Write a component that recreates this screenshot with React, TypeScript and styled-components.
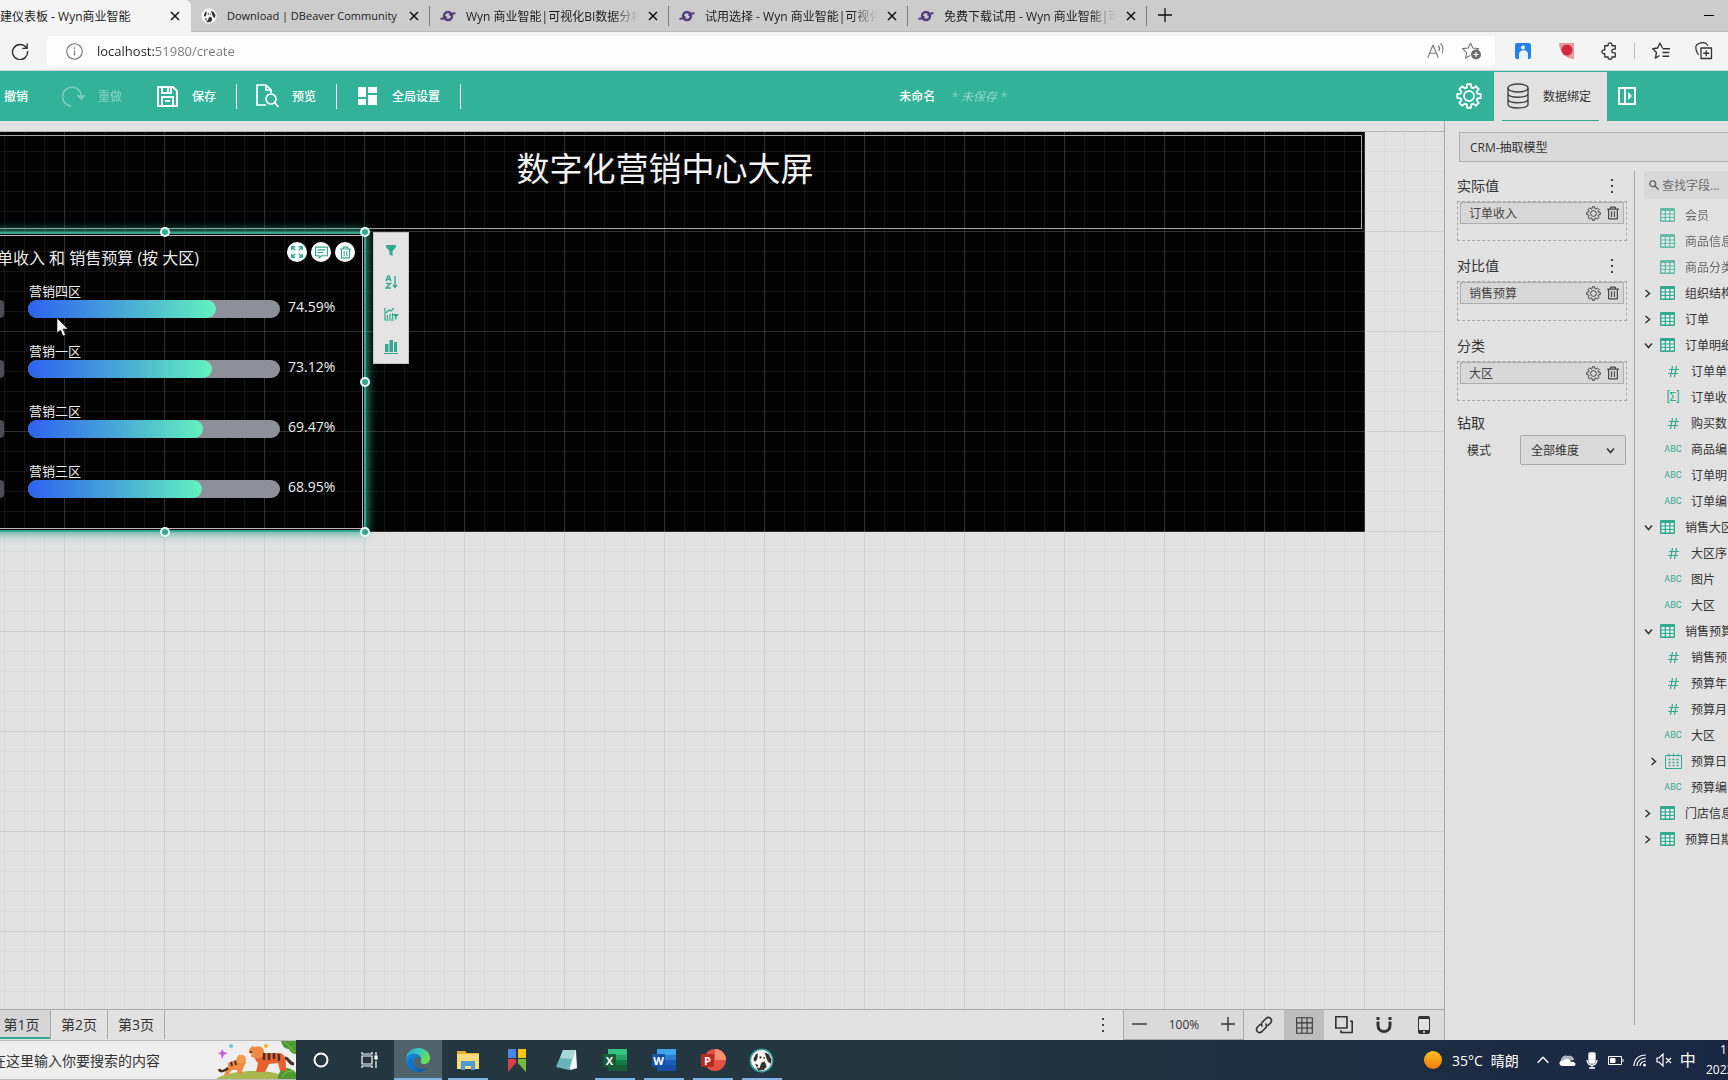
import React from "react";
import styled, { createGlobalStyle, css } from "styled-components";

const GREEN = "#31b299";
const TEAL = "#35a88f";
const SANS = `"Open Sans", "Noto Sans CJK SC", "Noto Sans", sans-serif`;

const Global = createGlobalStyle`
  *, *::before, *::after { box-sizing: border-box; }
  body { margin: 0; background: #e2e2e2; overflow: hidden; font-family: ${SANS}; font-size: 12px; color: #333; }
  button, input, select { font: inherit; color: inherit; margin: 0; padding: 0; border: 0; background: none; }
  input, select { outline: none; min-width: 0; }
  h1, h2, h3, p, ul { margin: 0; padding: 0; font-weight: 400; }
  ul { list-style: none; }
  svg { display: block; flex: none; }
`;

const Screen = styled.div`
  display: flex;
  flex-direction: column;
  height: 100vh;
  overflow: hidden;
  white-space: nowrap;
`;

/* ---------- browser chrome ---------- */
const TabStrip = styled.div`
  flex: none;
  display: flex;
  height: 32px;
  background: #cccccc;
  border-bottom: 1px solid #bdbdbd;
  color: #1c1c1c;
`;
const Tab = styled.div<{ $active?: boolean }>`
  display: flex;
  align-items: center;
  gap: 10px;
  flex: none;
  width: ${(p) => (p.$active ? 191 : 239)}px;
  padding: 0 11px 0 ${(p) => (p.$active ? 0 : 10)}px;
  ${(p) => p.$active && css`height: 32px; background: #f4f4f4; border-radius: 0 6px 0 0;`}
`;
const TabDivided = styled(Tab)`
  background: linear-gradient(#7d7d7d, #7d7d7d) right center / 1px 20px no-repeat;
`;
const TabTitle = styled.span<{ $fade?: boolean; $latin?: boolean }>`
  flex: 1;
  overflow: hidden;
  font-size: ${(p) => (p.$latin ? 11 : 12)}px;
  ${(p) => p.$fade && css`mask-image: linear-gradient(to right, #000 85%, transparent);`}
`;
const PlainButton = styled.button`
  display: grid;
  place-items: center;
  flex: none;
  cursor: pointer;
`;
const NewTab = styled(PlainButton)`width: 36px; height: 30px;`;
const Minimise = styled(PlainButton)`width: 38px; height: 32px; margin-left: auto;`;

const AddressBar = styled.div`
  flex: none;
  display: flex;
  align-items: center;
  height: 39px;
  padding: 0 15px 0 11px;
  background: #f4f4f4;
  border-bottom: 1px solid #cfd6d4;
  color: #333;
`;
const UrlBox = styled.label`
  flex: 1;
  display: flex;
  align-items: center;
  gap: 14px;
  height: 30px;
  margin: 0 18px;
  padding: 0 13px 0 19px;
  border-radius: 4px;
  background: #fdfdfd;
  color: #777;
`;
const UrlInput = styled.input`
  flex: 1;
  height: 24px;
  font-size: 13px;
  background: linear-gradient(to right, #222 58px, #777 58px);
  background-clip: text;
  -webkit-background-clip: text;
  color: transparent;
`;
const UrlActions = styled.span`display: flex; align-items: center; gap: 17px;`;
const ChromeIcons = styled.div`
  display: flex;
  align-items: center;
  gap: 25px;
  padding-left: 2px;
`;
const ChromeRule = styled.i`width: 1px; height: 16px; background: #bbb; margin: 0 -8px 0 -10px;`;

/* ---------- application header ---------- */
const Header = styled.header`
  flex: none;
  display: flex;
  height: 50px;
  align-items: center;
  background: ${GREEN};
  color: #fff;
`;
const HeaderTools = styled.div`display: flex; align-items: center; gap: 34px; padding-left: 4px;`;
const ToolButton = styled.button<{ $dim?: boolean }>`
  display: flex;
  align-items: center;
  gap: 12px;
  font-weight: 500;
  opacity: ${(p) => (p.$dim ? 0.35 : 1)};
  cursor: pointer;
`;
const Rule = styled.i<{ $last?: boolean }>`
  width: 1px;
  height: 25px;
  background: #fff;
  margin: 0 ${(p) => (p.$last ? 0 : 19)}px 0 20px;
`;
const DocTitle = styled.div`display: flex; gap: 16px; margin: 0 auto; font-weight: 500;`;
const Unsaved = styled.em`opacity: 0.45; font-weight: 400;`;
const HeaderPanel = styled.div`display: flex; width: 283px; height: 50px; flex: none;`;
const GearButton = styled(PlainButton)`width: 49px;`;
const BindTab = styled.button`
  display: flex;
  align-items: center;
  gap: 14px;
  width: 113px;
  margin-top: 1px;
  padding: 0 0 2px 13px;
  background: linear-gradient(${TEAL}, ${TEAL}) 8px 100% / 97px 1px no-repeat #e2e2e2;
  color: #333;
`;
const CollapseButton = styled(PlainButton)`width: 41px;`;

/* ---------- work area ---------- */
const Work = styled.div`flex: 1; display: flex; min-height: 0; background: #e2e2e2;`;
const Editor = styled.main`flex: 1; display: flex; flex-direction: column; min-width: 0; padding-top: 10px;`;

const grid = (minor: string, major: string) => css`
  background-image:
    linear-gradient(to right, ${major} 1px, transparent 1px),
    linear-gradient(${major} 1px, transparent 1px),
    linear-gradient(to right, ${minor} 1px, transparent 1px),
    linear-gradient(${minor} 1px, transparent 1px);
  background-size: 100px 100px, 100px 100px, 20px 20px, 20px 20px;
  background-position: 64px 0, 0 0, 4px 0, 0 0;
`;
const Stage = styled.div`
  position: relative;
  flex: 1;
  overflow: hidden;
  box-shadow: inset 0 1px #b4b4b4;
  ${grid("rgba(0,0,0,.028)", "rgba(0,0,0,.05)")}
`;
const Board = styled.section`
  position: absolute;
  left: 0;
  top: 1px;
  width: 1365px;
  height: 400px;
  background-color: #020202;
  ${grid("rgba(255,255,255,.075)", "rgba(255,255,255,.12)")}
  background-position: 64px -1px, 0 -1px, 4px -1px, 0 -1px;
`;
const TitleWidget = styled.div`
  position: absolute;
  left: -32px;
  top: 3px;
  width: 1394px;
  height: 94px;
  padding-top: 11px;
  border: 1px solid #a5a5a5;
  text-align: center;
`;
const BoardTitle = styled.h1`font-size: 33px; line-height: 44px; color: #f2f2f2;`;
const ChartWidget = styled.article`
  position: absolute;
  left: -36px;
  top: 100px;
  width: 402px;
  height: 300px;
  padding: 1px;
  border: 2px solid ${TEAL};
  box-shadow: 0 0 10px 1px ${TEAL};
`;
const ChartFrame = styled.div`
  height: 100%;
  border: 1px solid #b9b9b9;
  display: flex;
  flex-direction: column;
  align-items: flex-end;
  padding-top: 6px;
`;
const ChartHead = styled.div`
  display: flex;
  align-items: flex-start;
  justify-content: flex-end;
  gap: 88px;
  width: 396px;
  height: 40px;
  padding-right: 7px;
`;
const ChartTitle = styled.h2`
  font-size: 16px;
  line-height: 32px;
  color: #ececec;
`;
const HeadActions = styled.div`display: flex; gap: 4px;`;
const RoundButton = styled(PlainButton)`
  width: 20px;
  height: 20px;
  border-radius: 50%;
  background: #fff;
  color: ${TEAL};
`;
const BarList = styled.ul`width: 362px; display: flex; flex-direction: column;`;
const BarRow = styled.li`
  display: grid;
  grid-template-columns: 4px 252px 1fr;
  grid-template-rows: 18px 18px;
  column-gap: 24px;
  height: 60px;
`;
const RegionName = styled.span`grid-column: 2; padding-left: 1px; font-size: 13px; line-height: 18px; color: #f0f0f0;`;
const PrevTrack = styled.i`grid-column: 1; grid-row: 2; border-radius: 0 9px 9px 0; background: #4b4c55;`;
const Track = styled.div`grid-column: 2; grid-row: 2; border-radius: 9px; background: #8d9098;`;
const Fill = styled.div`
  height: 18px;
  border-radius: 9px;
  background: linear-gradient(to right, #2d62f0, #46a4d8 48%, #63f2bd);
`;
const Percent = styled.span`
  grid-column: 3;
  grid-row: 2;
  margin-left: -16px;
  font-size: 14px;
  line-height: 14px;
  color: #eee;
  font-weight: 500;
`;
const Handle = styled.i<{ $x: number; $y: number }>`
  position: absolute;
  left: ${(p) => p.$x}px;
  top: ${(p) => p.$y}px;
  width: 10px;
  height: 10px;
  border: 2px solid #e9fffa;
  border-radius: 50%;
  background: ${TEAL};
`;
const SideTools = styled.div`
  position: absolute;
  left: 373px;
  top: 100px;
  width: 36px;
  height: 132px;
  padding-top: 3px;
  display: flex;
  flex-direction: column;
  justify-content: space-around;
  align-items: center;
  background: #e4e4e4;
  border: 1px solid #c4c4c4;
  color: ${TEAL};
`;
const Pointer = styled.svg`position: absolute; left: 56px; top: 186px;`;

const Footer = styled.footer`
  flex: none;
  display: flex;
  height: 31px;
  border-top: 1px solid #a9a9a9;
`;
const PageTab = styled.button<{ $on?: boolean }>`
  width: ${(p) => (p.$on ? 51 : 57)}px;
  padding: 0 ${(p) => (p.$on ? 7 : 0)}px 1px 0;
  border-right: 1px solid #a9a9a9;
  font-size: 14px;
  height: 29px;
  ${(p) => p.$on && css`background: #d6d6d6; box-shadow: inset 0 -2px ${TEAL};`}
`;
const MoreButton = styled(PlainButton)`width: 40px; margin-left: auto;`;
const ZoomBox = styled.div`
  display: flex;
  justify-content: space-between;
  align-items: center;
  width: 121px;
  padding: 0 8px;
  border: 1px solid #a9a9a9;
  border-top: 0;
  background: #dadada;
`;
const FootButton = styled(PlainButton)<{ $on?: boolean }>`
  width: 40px;
  background: ${(p) => (p.$on ? "#bdbdbd" : "#dcdcdc")};
`;

/* ---------- data panel ---------- */
const Panel = styled.aside`
  flex: none;
  width: 284px;
  display: flex;
  flex-direction: column;
  gap: 9px;
  padding: 11px 0 15px 12px;
  border-left: 1px solid #a9a9a9;
  overflow: hidden;
`;
const ModelSelect = styled.select`
  flex: none;
  appearance: none;
  width: 300px;
  height: 30px;
  margin-left: 2px;
  padding-left: 10px;
  border: 1px solid #b0b0b0;
  background: #dadada;
`;
const PanelBody = styled.div`flex: 1; display: flex; min-height: 0;`;
const Bindings = styled.div`
  flex: none;
  width: 178px;
  padding-right: 7px;
  border-right: 1px solid #aaa;
`;
const Binding = styled.section`height: 80px;`;
const BindHead = styled.div`
  display: flex;
  justify-content: space-between;
  align-items: center;
  height: 30px;
  padding-right: 13px;
`;
const BindTitle = styled.h3`font-size: 14px; line-height: 24px;`;
const DropZone = styled.div`height: 40px; padding: 0 2px; border: 1px dashed #a8a8a8;`;
const Chip = styled.div`
  display: flex;
  align-items: center;
  gap: 5px;
  height: 22px;
  padding: 0 3px 0 8px;
  border: 1px solid #adadad;
  background: #d8d8d8;
  color: #444;
`;
const ChipName = styled.span`flex: 1;`;
const ModeRow = styled.label`
  display: flex;
  align-items: center;
  justify-content: space-between;
  position: relative;
  padding: 0 1px 0 10px;
`;
const ModeSelect = styled.select`
  appearance: none;
  width: 106px;
  height: 30px;
  padding-left: 10px;
  border: 1px solid #a9a9a9;
  border-radius: 2px;
  background: #dadada;
`;
const SelectArrow = styled.svg`position: absolute; right: 12px; top: 11px; pointer-events: none;`;
const Fields = styled.div`flex: 1; min-width: 0; padding-left: 9px; overflow: hidden;`;
const SearchBox = styled.label`
  display: flex;
  align-items: center;
  gap: 3px;
  height: 28px;
  padding-left: 5px;
  background: #d8d8d8;
  color: #666;
  margin-bottom: 3px;
`;
const SearchInput = styled.input`
  width: 100%;
  &::placeholder { color: #6f6f6f; opacity: 1; }
`;
const TreeRow = styled.li<{ $child?: boolean; $faint?: boolean }>`
  display: flex;
  align-items: center;
  height: 26px;
  padding-left: ${(p) => (p.$child ? 6 : 0)}px;
  opacity: ${(p) => (p.$faint ? 0.7 : 1)};
`;
const Twisty = styled.span`width: 15px; flex: none;`;
const Kind = styled.span<{ $child?: boolean; $sum?: boolean }>`
  display: grid;
  place-items: center;
  flex: none;
  width: ${(p) => (p.$child ? 18 : 16)}px;
  margin: ${(p) => (p.$child ? "0 9px 0 -1px" : "0 10px 0 0")};
  font-family: Roboto, sans-serif;
  font-size: ${(p) => (p.$sum ? 12 : 9)}px;
  color: ${TEAL};
`;

/* ---------- desktop taskbar ---------- */
const Taskbar = styled.nav`
  flex: none;
  display: flex;
  height: 40px;
  background: linear-gradient(to right, #24363f 0%, #24363f 50%, #1d2d40 78%, #1a2743 100%);
  color: #fff;
`;
const TaskSearch = styled.label`
  display: flex;
  width: 296px;
  flex: none;
  background: #efefef;
  border: 1px solid #bbb;
  border-width: 1px 0;
  overflow: hidden;
`;
const TaskInput = styled.input`
  width: 224px;
  flex: none;
  margin-left: -8px;
  font-size: 14px;
  &::placeholder { color: #333; opacity: 1; }
`;
const TaskButton = styled(PlainButton)<{ $run?: boolean; $on?: boolean }>`
  width: ${(p) => (p.$on ? 48 : 49)}px;
  background: ${(p) => (p.$run ? "linear-gradient(#7fb4e4, #7fb4e4) center bottom / 40px 2px no-repeat" : "none")};
  ${(p) => p.$on && css`margin-right: 1px; background: linear-gradient(#7fb4e4, #7fb4e4) center bottom / 48px 2px no-repeat #52626b;`}
`;
const Tray = styled.div`
  display: flex;
  align-items: center;
  gap: 8px;
  margin-left: auto;
  width: 304px;
  flex: none;
  font-size: 14px;
`;
const TrayIcons = styled.div`display: flex; align-items: center; gap: 8px; margin-left: 8px;`;
const Ime = styled.span`font-size: 16px; line-height: 20px;`;
const Clock = styled.time`
  width: 22px;
  margin-left: auto;
  display: flex;
  flex-direction: column;
  overflow: hidden;
  font-size: 12px;
  line-height: 20px;
`;
const Hour = styled.span`padding-left: 14px;`;

/* ---------- drawings ---------- */
type Size = { s?: number; w?: number };

const gearPath = (() => {
  const pts: string[] = [];
  for (let i = 0; i < 8; i++) {
    const a = (i * Math.PI) / 4;
    [[-0.28, 8], [-0.17, 11], [0.17, 11], [0.28, 8]].forEach(([d, r]) =>
      pts.push(`${(12 + r * Math.sin(a + d)).toFixed(2)} ${(12 - r * Math.cos(a + d)).toFixed(2)}`)
    );
  }
  return "M" + pts.join("L") + "Z";
})();

const Line = ({ d, s = 16, w = 1.3, children }: Size & { d?: string; children?: React.ReactNode }) => (
  <svg width={s} height={s} viewBox="0 0 24 24" fill="none" stroke="currentColor" strokeWidth={(w * 24) / s} strokeLinejoin="round">
    {d && <path d={d} />}
    {children}
  </svg>
);
const Gear = ({ s = 26, w = 1.8 }: Size) => <Line s={s} w={w} d={gearPath}><circle cx="12" cy="12" r="4.6" /></Line>;
const Trash = ({ s = 14, w = 1.2 }: Size) => <Line s={s} w={w} d="M2 5.500h20M8 5V2h8v3M4.500 6v16h15V6M9.500 9v10M14.500 9v10" />;
const Close = () => <svg width="10" height="10" viewBox="0 0 10 10" stroke="#111" strokeWidth="1.5"><path d="M1 1l8 8M9 1l-8 8" /></svg>;
const Dots = () => <svg width="3" height="16" fill="#444"><rect width="2" height="2" y="1" /><rect width="2" height="2" y="7" /><rect width="2" height="2" y="13" /></svg>;
const WynMark = () => (
  <svg width="16" height="16" viewBox="0 0 16 16" fill="none" stroke="#553c80">
    <circle cx="8" cy="8" r="4" strokeWidth="2.400" />
    <path d="M0.500 10.500c3 1 4.500-.5 6-2M15.500 5.500c-3-1-4.500.5-6 2" strokeWidth="2" />
  </svg>
);
const BeaverMark = ({ s = 16, ring = "#f3f3f3" }: { s?: number; ring?: string }) => (
  <svg width={s} height={s} viewBox="0 0 24 24">
    <circle cx="12" cy="12" r="11.500" fill={ring} />
    <circle cx="12" cy="12" r="10" fill="#f7f7f5" />
    <path d="M4.500 10l2-4 2-1-.5 5-1.500 3-2-1z" fill="#33302e" />
    <path d="M15 4l4 2 2.500 5-.5 4-3-2-1.500-4z" fill="#33302e" />
    <path d="M12 14l3-1 1 2 1 3-3 3-5 .5-2-3 3 1z" fill="#33302e" />
    <path d="M6 15l2.500 1 .5 1.500-2 .5z" fill="#33302e" />
    <circle cx="11" cy="9" r="1" fill="#222" /><circle cx="14.500" cy="9.500" r=".8" fill="#222" />
  </svg>
);
const TableMark = () => (
  <svg width="15" height="14" viewBox="0 0 15 14">
    <rect width="15" height="14" rx="1" fill={TEAL} />
    {[3, 6.500, 10].map((y) => [1.500, 6, 10.500].map((x) => <rect key={x + "-" + y} x={x} y={y} width="3.200" height="2.400" fill="#e9f3f0" />))}
  </svg>
);
const DateMark = () => (
  <svg width="17" height="16" viewBox="0 0 17 16" fill="none" stroke={TEAL}>
    <path d="M.5 2.500h16v13H.5zM4 .5v3M8.500.5v3M13 .5v3" />
    <path d="M3.500 6.500h11M3.500 9.500h11M3.500 12.500h11" strokeDasharray="2 2" strokeWidth="1.500" />
  </svg>
);
const Chevron = ({ open }: { open?: boolean }) => (
  <svg width="9" height="9" viewBox="0 0 9 9" fill="none" stroke="#333" strokeWidth="1.500">
    <path d={open ? "M1 2.500l3.500 4 3.500-4" : "M1.500 1l4 3.500-4 3.500"} />
  </svg>
);
const Hash = () => <svg width="11" height="11" viewBox="0 0 11 11" stroke={TEAL} strokeWidth="1.200"><path d="M4.500 0L2.500 11M8.500 0L6.500 11M1 3.500h10M0 7.500h10" /></svg>;

const EdgeMark = () => (
  <svg width="26" height="26" viewBox="0 0 26 26">
    <defs>
      <linearGradient id="edgeTop" x1="0" y1="0" x2="1" y2="0.400"><stop offset="0" stopColor="#2aa7dd" /><stop offset=".55" stopColor="#37cbc0" /><stop offset="1" stopColor="#6be04e" /></linearGradient>
      <linearGradient id="edgeLow" x1="0" y1="0" x2="1" y2="1"><stop offset="0" stopColor="#1b8fdc" /><stop offset="1" stopColor="#0d509c" /></linearGradient>
    </defs>
    <path d="M1 13C1 5 7 1 13 1c7 0 12 4.500 12 10 0 4-3 6-6 6s-4-1.500-3-3c1-2-1-5-4-5-5 0-11 3-11 4z" fill="url(#edgeTop)" />
    <path d="M1 13c0-4 4-6.500 8-6.500 5 0 7.500 3.500 7 6-.3-1.500-2-2.500-4-2-3.500 1-4 5-2 8 2.500 4 8 5 13 1.500C21 23.500 17 25 13 25 6 25 1 20 1 13z" fill="url(#edgeLow)" />
    <path d="M9 11c-3 4-1 11 5 13-6 1-11-3-11-8 0-3 3-5 6-5z" fill="#1573c6" />
  </svg>
);
const FolderMark = () => (
  <svg width="24" height="22" viewBox="0 0 24 22">
    <path d="M1 2h8l2 2h12v16H1z" fill="#e5b22f" /><path d="M1 5h22v15H1z" fill="#fbdc7c" />
    <path d="M5 12h14v9h-4v-4H9v4H5z" fill="#4b9cd3" />
  </svg>
);
const FlagMark = () => (
  <svg width="20" height="24" viewBox="0 0 20 24">
    <path d="M1 1h8v9H1z" fill="#4a87e8" /><path d="M11 1h8v9h-8z" fill="#f5c518" />
    <path d="M1 11h8v4l-8 9z" fill="#d93d4a" /><path d="M11 11h8v13l-8-9z" fill="#79b83e" />
  </svg>
);
const NoteMark = () => (
  <svg width="24" height="24" viewBox="0 0 24 24">
    <path d="M9 2h13l1 18-7 2z" fill="#dfe9ea" /><path d="M9 2h12l-6 20-13-3z" fill="#69b3bb" /><path d="M9 2h12l-3 9-12-1z" fill="#a9d7da" />
    <path d="M16 22l5-19 2 17z" fill="#f4f6f6" />
  </svg>
);
const OfficeMark = ({ letter, tones, round }: { letter: string; tones: string[]; round?: boolean }) => (
  <svg width="26" height="24" viewBox="0 0 26 24">
    {round ? (
      <><circle cx="15" cy="12" r="11" fill={tones[1]} /><path d="M15 1a11 11 0 0 1 11 11H15z" fill={tones[0]} /></>
    ) : (
      <><path d="M6 1h19v6H6z" fill={tones[0]} /><path d="M6 7h19v5H6z" fill={tones[1]} /><path d="M6 12h19v5H6z" fill={tones[2]} /><path d="M6 17h19v6H6z" fill={tones[3]} /></>
    )}
    <rect x="1" y="6" width="13" height="13" rx="1" fill={tones[3]} />
    <text x="7.500" y="16.500" textAnchor="middle" fontSize="11" fontWeight="700" fill="#fff" fontFamily="Open Sans, sans-serif">{letter}</text>
  </svg>
);
const Tigers = () => (
  <svg width="80" height="38" viewBox="0 0 80 38">
    <path d="M0 38c12-9 50-10 62-5l6 5z" fill="#a9b84e" />
    <path d="M65 0h15v13c-3 0-6-2-7-5-4 0-7-3-8-8zM62 38c0-6 3-10 7-11 5 0 9 2 11 5v6z" fill="#4e9a34" />
    <path d="M68 1c4 2 6 6 11 10M66 36c3-5 6-6 11-6" stroke="#8ec64c" fill="none" />
    <path d="M38 15c3 0 4-3 9-3h15c8 0 8 7 8 18h-6l-2-8-9 1-4 8h-9l2-9c-3-3-4-6-4-7z" fill="#e8622f" />
    <path d="M33 9l3-4 3 1c4-2 8 0 9 4 1 5-3 8-8 7-5 0-8-3-7-8z" fill="#f28a45" />
    <circle cx="35" cy="11" r="1" fill="#33231f" /><path d="M31 12l5 1-2 3z" fill="#fff" />
    <path d="M48 12v7M53 12v7M58 12v6M63 13v7" stroke="#45302f" strokeWidth="2.400" />
    <path d="M69 17c4 0 4 6 9 6" stroke="#45302f" strokeWidth="3" fill="none" />
    <path d="M12 22c3-2 9-3 12-5l6 4-4 9v3h-4l-1-4h-5l-4 5H8l4-8z" fill="#f08a3f" />
    <path d="M21 16l2-2c4-1 7 1 7 4s-3 5-6 4-4-3-3-6z" fill="#f39a50" />
    <path d="M12 27c-4 4-8 4-9 1" stroke="#453022" strokeWidth="2.500" fill="none" />
    <path d="M15 21l1 4M19 20l1 4" stroke="#45302f" strokeWidth="2" />
    <path d="M6 8l2 3 4 1-4 2-2 4-1-4-3-2 3-1z" fill="#c466dc" />
    <circle cx="15" cy="5" r="2" fill="#6cccd2" /><circle cx="50" cy="5" r="2" fill="#e7bd1b" />
  </svg>
);

/* ---------- data ---------- */
const regions = [
  { name: "营销四区", value: 74.59 },
  { name: "营销一区", value: 73.12 },
  { name: "营销二区", value: 69.47 },
  { name: "营销三区", value: 68.95 },
];
const bindings = [
  { title: "实际值", field: "订单收入", menu: true },
  { title: "对比值", field: "销售预算", menu: true },
  { title: "分类", field: "大区", menu: false },
];
type Node = { name: string; kind: "table" | "num" | "sum" | "abc" | "date"; state?: "open" | "shut"; faint?: boolean };
const nodes: Node[] = [
  { name: "会员", kind: "table", faint: true },
  { name: "商品信息", kind: "table", faint: true },
  { name: "商品分类", kind: "table", faint: true },
  { name: "组织结构", kind: "table", state: "shut" },
  { name: "订单", kind: "table", state: "shut" },
  { name: "订单明细", kind: "table", state: "open" },
  { name: "订单单", kind: "num" },
  { name: "订单收", kind: "sum" },
  { name: "购买数", kind: "num" },
  { name: "商品编", kind: "abc" },
  { name: "订单明", kind: "abc" },
  { name: "订单编", kind: "abc" },
  { name: "销售大区", kind: "table", state: "open" },
  { name: "大区序", kind: "num" },
  { name: "图片", kind: "abc" },
  { name: "大区", kind: "abc" },
  { name: "销售预算", kind: "table", state: "open" },
  { name: "销售预", kind: "num" },
  { name: "预算年", kind: "num" },
  { name: "预算月", kind: "num" },
  { name: "大区", kind: "abc" },
  { name: "预算日", kind: "date", state: "shut" },
  { name: "预算编", kind: "abc" },
  { name: "门店信息", kind: "table", state: "shut" },
  { name: "预算日期", kind: "table", state: "shut" },
];
const kindMark = {
  table: <TableMark />,
  num: <Hash />,
  sum: <>[Σ]</>,
  abc: <>ABC</>,
  date: <DateMark />,
};
const wynTabs = ["Wyn 商业智能|可视化BI数据分析", "试用选择 - Wyn 商业智能|可视化", "免费下载试用 - Wyn 商业智能|可"];

export default function App() {
  return (
    <Screen>
      <Global />
      <TabStrip>
        <Tab $active><TabTitle>建仪表板 - Wyn商业智能</TabTitle><PlainButton aria-label="关闭"><Close /></PlainButton></Tab>
        <TabDivided><BeaverMark /><TabTitle $latin>Download | DBeaver Community</TabTitle><PlainButton aria-label="关闭"><Close /></PlainButton></TabDivided>
        {wynTabs.map((t) => (
          <TabDivided key={t}><WynMark /><TabTitle $fade>{t}</TabTitle><PlainButton aria-label="关闭"><Close /></PlainButton></TabDivided>
        ))}
        <NewTab aria-label="新建标签页"><svg width="14" height="14" stroke="#111" strokeWidth="1.300"><path d="M7 0v14M0 7h14" /></svg></NewTab>
        <Minimise aria-label="最小化"><svg width="10" height="2"><rect width="10" height="1" /></svg></Minimise>
      </TabStrip>

      <AddressBar>
        <PlainButton aria-label="刷新"><Line s={18} w={1.4} d="M20.500 8A10 10 0 1 0 22 12M21.500 2v6.500H15" /></PlainButton>
        <UrlBox>
          <Line s={17} w={1.1}><circle cx="12" cy="12" r="11" /><path d="M12 10.500v7M12 6v2.500" /></Line>
          <UrlInput aria-label="地址" defaultValue="localhost:51980/create" />
          <UrlActions>
            <Line s={18} w={1.1} d="M1 21L8 4l7 17M3.500 15h9M15 5c2 2 2 5 1 7M18 2c4 3 4 9 2 13" />
            <svg width="20" height="18" viewBox="0 0 20 18"><path d="M8.500 1l2.300 5 5.700.6-2 2.400M8.500 1L6.200 6l-5.500.6 4 4L3.600 16l4.700-2.500" fill="none" stroke="#777" strokeWidth="1.100" /><circle cx="14" cy="12.500" r="5" fill="#6b6b6b" /><path d="M14 10v5M11.500 12.500h5" stroke="#fff" strokeWidth="1.200" /></svg>
          </UrlActions>
        </UrlBox>
        <ChromeIcons>
          <svg width="16" height="16" viewBox="0 0 16 16"><rect width="16" height="16" rx="2" fill="#2381e8" /><circle cx="8" cy="4.500" r="2" fill="#fff" /><path d="M4 16v-5c0-5 9-5 9 0v5z" fill="#e8f4ff" /></svg>
          <svg width="20" height="16" viewBox="0 0 20 16"><path d="M3 0h15v16C10 16 3 9 3 0z" fill="#e59aa2" /><circle cx="11" cy="7" r="5.500" fill="#d5283e" /></svg>
          <Line s={18} w={1.3} d="M5 5h4.500c-1-5 6-5 5 0H19v4.500h-1.500c-4 0-4 5 0 5H19V20h-4.500c1 4-6 4-5 0H5v-4.500c-5 1-5-6 0-5z" />
          <ChromeRule />
          <Line s={18} w={1.3} d="M14 8L10.500 1.500 7.500 8 1 9l5 5-1.500 7.500L10 18M14 9h10M14 14h9M14 19h9" />
          <Line s={18} w={1.3} d="M8 8h14v14H8zM15 11v8M11 15h8M5 17C2 15 0 7 2 4c4-3 9-4 13-2l2 3" />
        </ChromeIcons>
      </AddressBar>

      <Header>
        <HeaderTools>
          <ToolButton>撤销</ToolButton>
          <ToolButton $dim><Line s={24} w={1.8} d="M9 22A9.500 9.500 0 1 1 19.500 13M15.500 11l4 4 3-4" />重做</ToolButton>
          <ToolButton><Line s={24} w={2} d="M2 3h15l4 4v15H2zM6 3v6h9V3M12 4v4M6 22v-9h11v9M9 17h5" />保存</ToolButton>
        </HeaderTools>
        <Rule />
        <ToolButton><Line s={24} w={1.7} d="M10 21H1V1h9l5 5v3M10 1v5h5M19 19l3.500 4"><circle cx="15" cy="15" r="5" /></Line>预览</ToolButton>
        <Rule />
        <ToolButton><svg width="24" height="24" fill="#fff"><path d="M2 3h8v10H2zM12 3h9v6h-9zM2 15h8v6H2zM12 11h9v10h-9z" /></svg>全局设置</ToolButton>
        <Rule $last />
        <DocTitle><span>未命名</span><Unsaved>* 未保存 *</Unsaved></DocTitle>
        <HeaderPanel>
          <GearButton aria-label="设置"><Gear /></GearButton>
          <BindTab>
            <svg width="22" height="26" viewBox="0 0 22 26" fill="none" stroke="#444" strokeWidth="1.400"><ellipse cx="11" cy="5" rx="10" ry="4" /><path d="M1 5v16c0 5.300 20 5.300 20 0V5M1 10.500c0 5 20 5 20 0M1 16c0 5 20 5 20 0" /></svg>
            数据绑定
          </BindTab>
          <CollapseButton aria-label="收起面板"><svg width="18" height="18" viewBox="0 0 18 18"><path d="M1 1h16v16H1zM7 1v16" fill="none" stroke="#fff" strokeWidth="2" /><path d="M10 5l4 4-4 4z" fill="#fff" /></svg></CollapseButton>
        </HeaderPanel>
      </Header>

      <Work>
        <Editor>
          <Stage>
            <Board>
              <TitleWidget><BoardTitle>数字化营销中心大屏</BoardTitle></TitleWidget>
              <ChartWidget>
                <ChartFrame>
                  <ChartHead>
                    <ChartTitle>单收入 和 销售预算 (按 大区)</ChartTitle>
                    <HeadActions>
                      <RoundButton aria-label="放大"><Line s={14} w={1.4} d="M3 9V3h6M15 3h6v6M21 15v6h-6M9 21H3v-6M3 3l6 6M21 3l-6 6M21 21l-6-6M3 21l6-6" /></RoundButton>
                      <RoundButton aria-label="评论"><Line s={13} w={1.2} d="M1 2h22v16H12l-4 4v-4H1zM5 7h14M5 12h10" /></RoundButton>
                      <RoundButton aria-label="删除"><Trash s={13} w={1.1} /></RoundButton>
                    </HeadActions>
                  </ChartHead>
                  <BarList>
                    {regions.map((r) => (
                      <BarRow key={r.name}>
                        <RegionName>{r.name}</RegionName>
                        <PrevTrack />
                        <Track><Fill style={{ width: `${r.value}%` }} /></Track>
                        <Percent>{r.value}%</Percent>
                      </BarRow>
                    ))}
                  </BarList>
                </ChartFrame>
              </ChartWidget>
              <Handle $x={160} $y={95} /><Handle $x={360} $y={95} /><Handle $x={360} $y={245} /><Handle $x={160} $y={395} /><Handle $x={360} $y={395} />
              <SideTools>
                <PlainButton aria-label="筛选"><svg width="10" height="11" fill={TEAL}><path d="M0 0h10v2L6.500 6v5l-3-1.500V6L0 2z" /></svg></PlainButton>
                <PlainButton aria-label="排序"><svg width="13" height="14" viewBox="0 0 13 14" fill="none" stroke={TEAL} strokeWidth="1.400"><path d="M1 6l2-5h1l2 5M2 4.500h3M1 8.500h4.500L1 13h5M10 1v11M8 10l2 2.500 2-2.500" /></svg></PlainButton>
                <PlainButton aria-label="图表筛选"><svg width="15" height="14" viewBox="0 0 15 14" fill="none" stroke={TEAL} strokeWidth="1.200"><path d="M1 1v12h9M3.500 12V8M6 12V7M8.500 12V6M2 6l3-3 2 1 3-3" /><path d="M8.500 7H15l-2.500 3v3l-1.500-1v-2z" fill={TEAL} stroke="none" /></svg></PlainButton>
                <PlainButton aria-label="图表类型"><svg width="14" height="14" fill={TEAL}><path d="M1 4h3.500v8H1zM5.500 0H9v12H5.500zM10 2h3v10h-3zM0 13h14v1H0z" /></svg></PlainButton>
              </SideTools>
              <Pointer width="13" height="19" viewBox="0 0 13 19"><path d="M1 0v15l3.500-3 2.500 6 2.500-1-2.500-6h5z" fill="#fff" stroke="#111" strokeWidth=".6" /></Pointer>
            </Board>
          </Stage>
          <Footer>
            <PageTab $on>第1页</PageTab><PageTab>第2页</PageTab><PageTab>第3页</PageTab>
            <MoreButton aria-label="更多"><Dots /></MoreButton>
            <ZoomBox>
              <PlainButton aria-label="缩小"><svg width="15" height="15" stroke="#333" strokeWidth="1.400"><path d="M0 7h15" /></svg></PlainButton>
              <span>100%</span>
              <PlainButton aria-label="放大"><svg width="14" height="15" stroke="#333" strokeWidth="1.400"><path d="M0 7h14M7 0v14" /></svg></PlainButton>
            </ZoomBox>
            <FootButton aria-label="链接"><Line s={18} w={1.6} d="M10 14c-2-2-2-4 0-6l5-5c4-3 9 1 6 6l-4 4M14 10c2 2 2 4 0 6l-5 5c-4 3-9-1-6-6l4-4" /></FootButton>
            <FootButton $on aria-label="网格"><Line s={17} w={1.1} d="M1 1h22v22H1zM8.300 1v22M15.600 1v22M1 8.300h22M1 15.600h22" /></FootButton>
            <FootButton aria-label="图层"><Line s={18} w={1.7} d="M1 1h15v15H1zM20 7h3v15H8v-3" /></FootButton>
            <FootButton aria-label="吸附"><svg width="16" height="17" viewBox="0 0 16 17" fill="none" stroke="#333" strokeWidth="3"><path d="M2 4.500v4c0 8 12 8 12 0v-4M2 0v3M14 0v3" /></svg></FootButton>
            <FootButton aria-label="手机"><svg width="12" height="18" viewBox="0 0 12 18"><rect width="12" height="18" rx="2" fill="#333" /><rect x="1" y="3" width="10" height="11" fill="#e2e2e2" /><circle cx="6" cy="16" r="1" fill="#fff" /></svg></FootButton>
          </Footer>
        </Editor>

        <Panel>
          <ModelSelect aria-label="数据模型"><option>CRM-抽取模型</option></ModelSelect>
          <PanelBody>
            <Bindings>
              {bindings.map((b) => (
                <Binding key={b.title}>
                  <BindHead><BindTitle>{b.title}</BindTitle>{b.menu && <PlainButton aria-label="更多"><Dots /></PlainButton>}</BindHead>
                  <DropZone>
                    <Chip>
                      <ChipName>{b.field}</ChipName>
                      <PlainButton aria-label="字段设置"><Gear s={15} w={1} /></PlainButton>
                      <PlainButton aria-label="移除字段"><Trash /></PlainButton>
                    </Chip>
                  </DropZone>
                </Binding>
              ))}
              <BindTitle>钻取</BindTitle>
              <ModeRow>
                模式
                <ModeSelect><option>全部维度</option></ModeSelect>
                <SelectArrow width="9" height="9" viewBox="0 0 9 9" fill="none" stroke="#333" strokeWidth="1.500"><path d="M1 2.500l3.500 4 3.500-4" /></SelectArrow>
              </ModeRow>
            </Bindings>
            <Fields>
              <SearchBox><Line s={10} w={1.4} d="M14 14l9 9"><circle cx="9" cy="9" r="7" /></Line><SearchInput aria-label="查找字段" placeholder="查找字段..." /></SearchBox>
              <ul>
                {nodes.map((n, i) => {
                  const child = n.kind !== "table";
                  return (
                    <TreeRow key={i} $child={child} $faint={n.faint}>
                      <Twisty>{n.state && <Chevron open={n.state === "open"} />}</Twisty>
                      <Kind $child={child} $sum={n.kind === "sum"}>{kindMark[n.kind]}</Kind>
                      {n.name}
                    </TreeRow>
                  );
                })}
              </ul>
            </Fields>
          </PanelBody>
        </Panel>
      </Work>

      <Taskbar>
        <TaskSearch><TaskInput aria-label="搜索" placeholder="在这里输入你要搜索的内容" /><Tigers /></TaskSearch>
        <TaskButton aria-label="Cortana"><svg width="16" height="16"><circle cx="8" cy="8" r="6.500" fill="none" stroke="#fff" strokeWidth="2" /></svg></TaskButton>
        <TaskButton aria-label="任务视图"><svg width="17" height="16" viewBox="0 0 17 16" fill="none" stroke="#fff" strokeWidth="1.200"><path d="M1 4h10v8H1zM1 0v2h10V0M1 16v-2h10v2M15 0v3M15 9v7" /><rect x="14" y="4" width="2" height="3" fill="#fff" /></svg></TaskButton>
        <TaskButton $on aria-label="Edge"><EdgeMark /></TaskButton>
        <TaskButton $run aria-label="文件"><FolderMark /></TaskButton>
        <TaskButton aria-label="应用"><FlagMark /></TaskButton>
        <TaskButton aria-label="记事本"><NoteMark /></TaskButton>
        <TaskButton $run aria-label="Excel"><OfficeMark letter="X" tones={["#33c481", "#21a366", "#107c41", "#185c37"]} /></TaskButton>
        <TaskButton $run aria-label="Word"><OfficeMark letter="W" tones={["#41a5ee", "#2b7cd3", "#185abd", "#174ea6"]} /></TaskButton>
        <TaskButton $run aria-label="PowerPoint"><OfficeMark round letter="P" tones={["#ff8f6b", "#e05243", "#d35230", "#b72b20"]} /></TaskButton>
        <TaskButton $run aria-label="DBeaver"><BeaverMark s={25} ring="#3b9c97" /></TaskButton>
        <Tray>
          <svg width="20" height="20"><defs><linearGradient id="sun" x1="0" y1="0" x2="0" y2="1"><stop offset="0" stopColor="#ffc21c" /><stop offset="1" stopColor="#ef7b12" /></linearGradient></defs><circle cx="9" cy="10" r="9" fill="url(#sun)" /></svg>
          <span>35°C</span><span>晴朗</span>
          <TrayIcons>
            <Line s={16} w={1.4} d="M4 16l8-8 8 8" />
            <svg width="17" height="12" viewBox="0 0 17 12"><path d="M2 8C1 4 5 0 9 2c4-1 6 2 6 4z" fill="#aeb4bd" /><path d="M3 12c-4-1-3-6 1-5 3-4 7-2 8 1 5-1 6 4 2 4z" fill="#fff" /></svg>
            <svg width="16" height="17" viewBox="0 0 16 17" fill="none" stroke="#fff" strokeWidth="1.300"><rect x="5" y="1" width="6" height="10" rx="1" fill="#fff" /><path d="M3 8c0 7 10 7 10 0M8 13v3M5 16h6" /></svg>
            <svg width="16" height="12" viewBox="0 0 16 12" fill="none" stroke="#fff"><path d="M.5 2.500h13v8H.5zM15 5v3" /><path d="M2.500 4.500H7v4H2.500z" fill="#fff" /></svg>
            <svg width="16" height="16" viewBox="0 0 16 16" fill="none" stroke="#fff" strokeWidth="1.200"><path d="M2 14C2 7 7 3 14 3M5 14c0-5 4-8 9-8M8 14c0-3 3-5 6-5" /><circle cx="12.500" cy="13" r="1.500" fill="#fff" stroke="none" /></svg>
            <svg width="16" height="14" viewBox="0 0 16 14" fill="none" stroke="#fff" strokeWidth="1.200"><path d="M1 5h2l4-4v12L3 9H1zM10 5l5 5M15 5l-5 5" /></svg>
            <Ime>中</Ime>
          </TrayIcons>
          <Clock><Hour>11</Hour><span>2022</span></Clock>
        </Tray>
      </Taskbar>
    </Screen>
  );
}
